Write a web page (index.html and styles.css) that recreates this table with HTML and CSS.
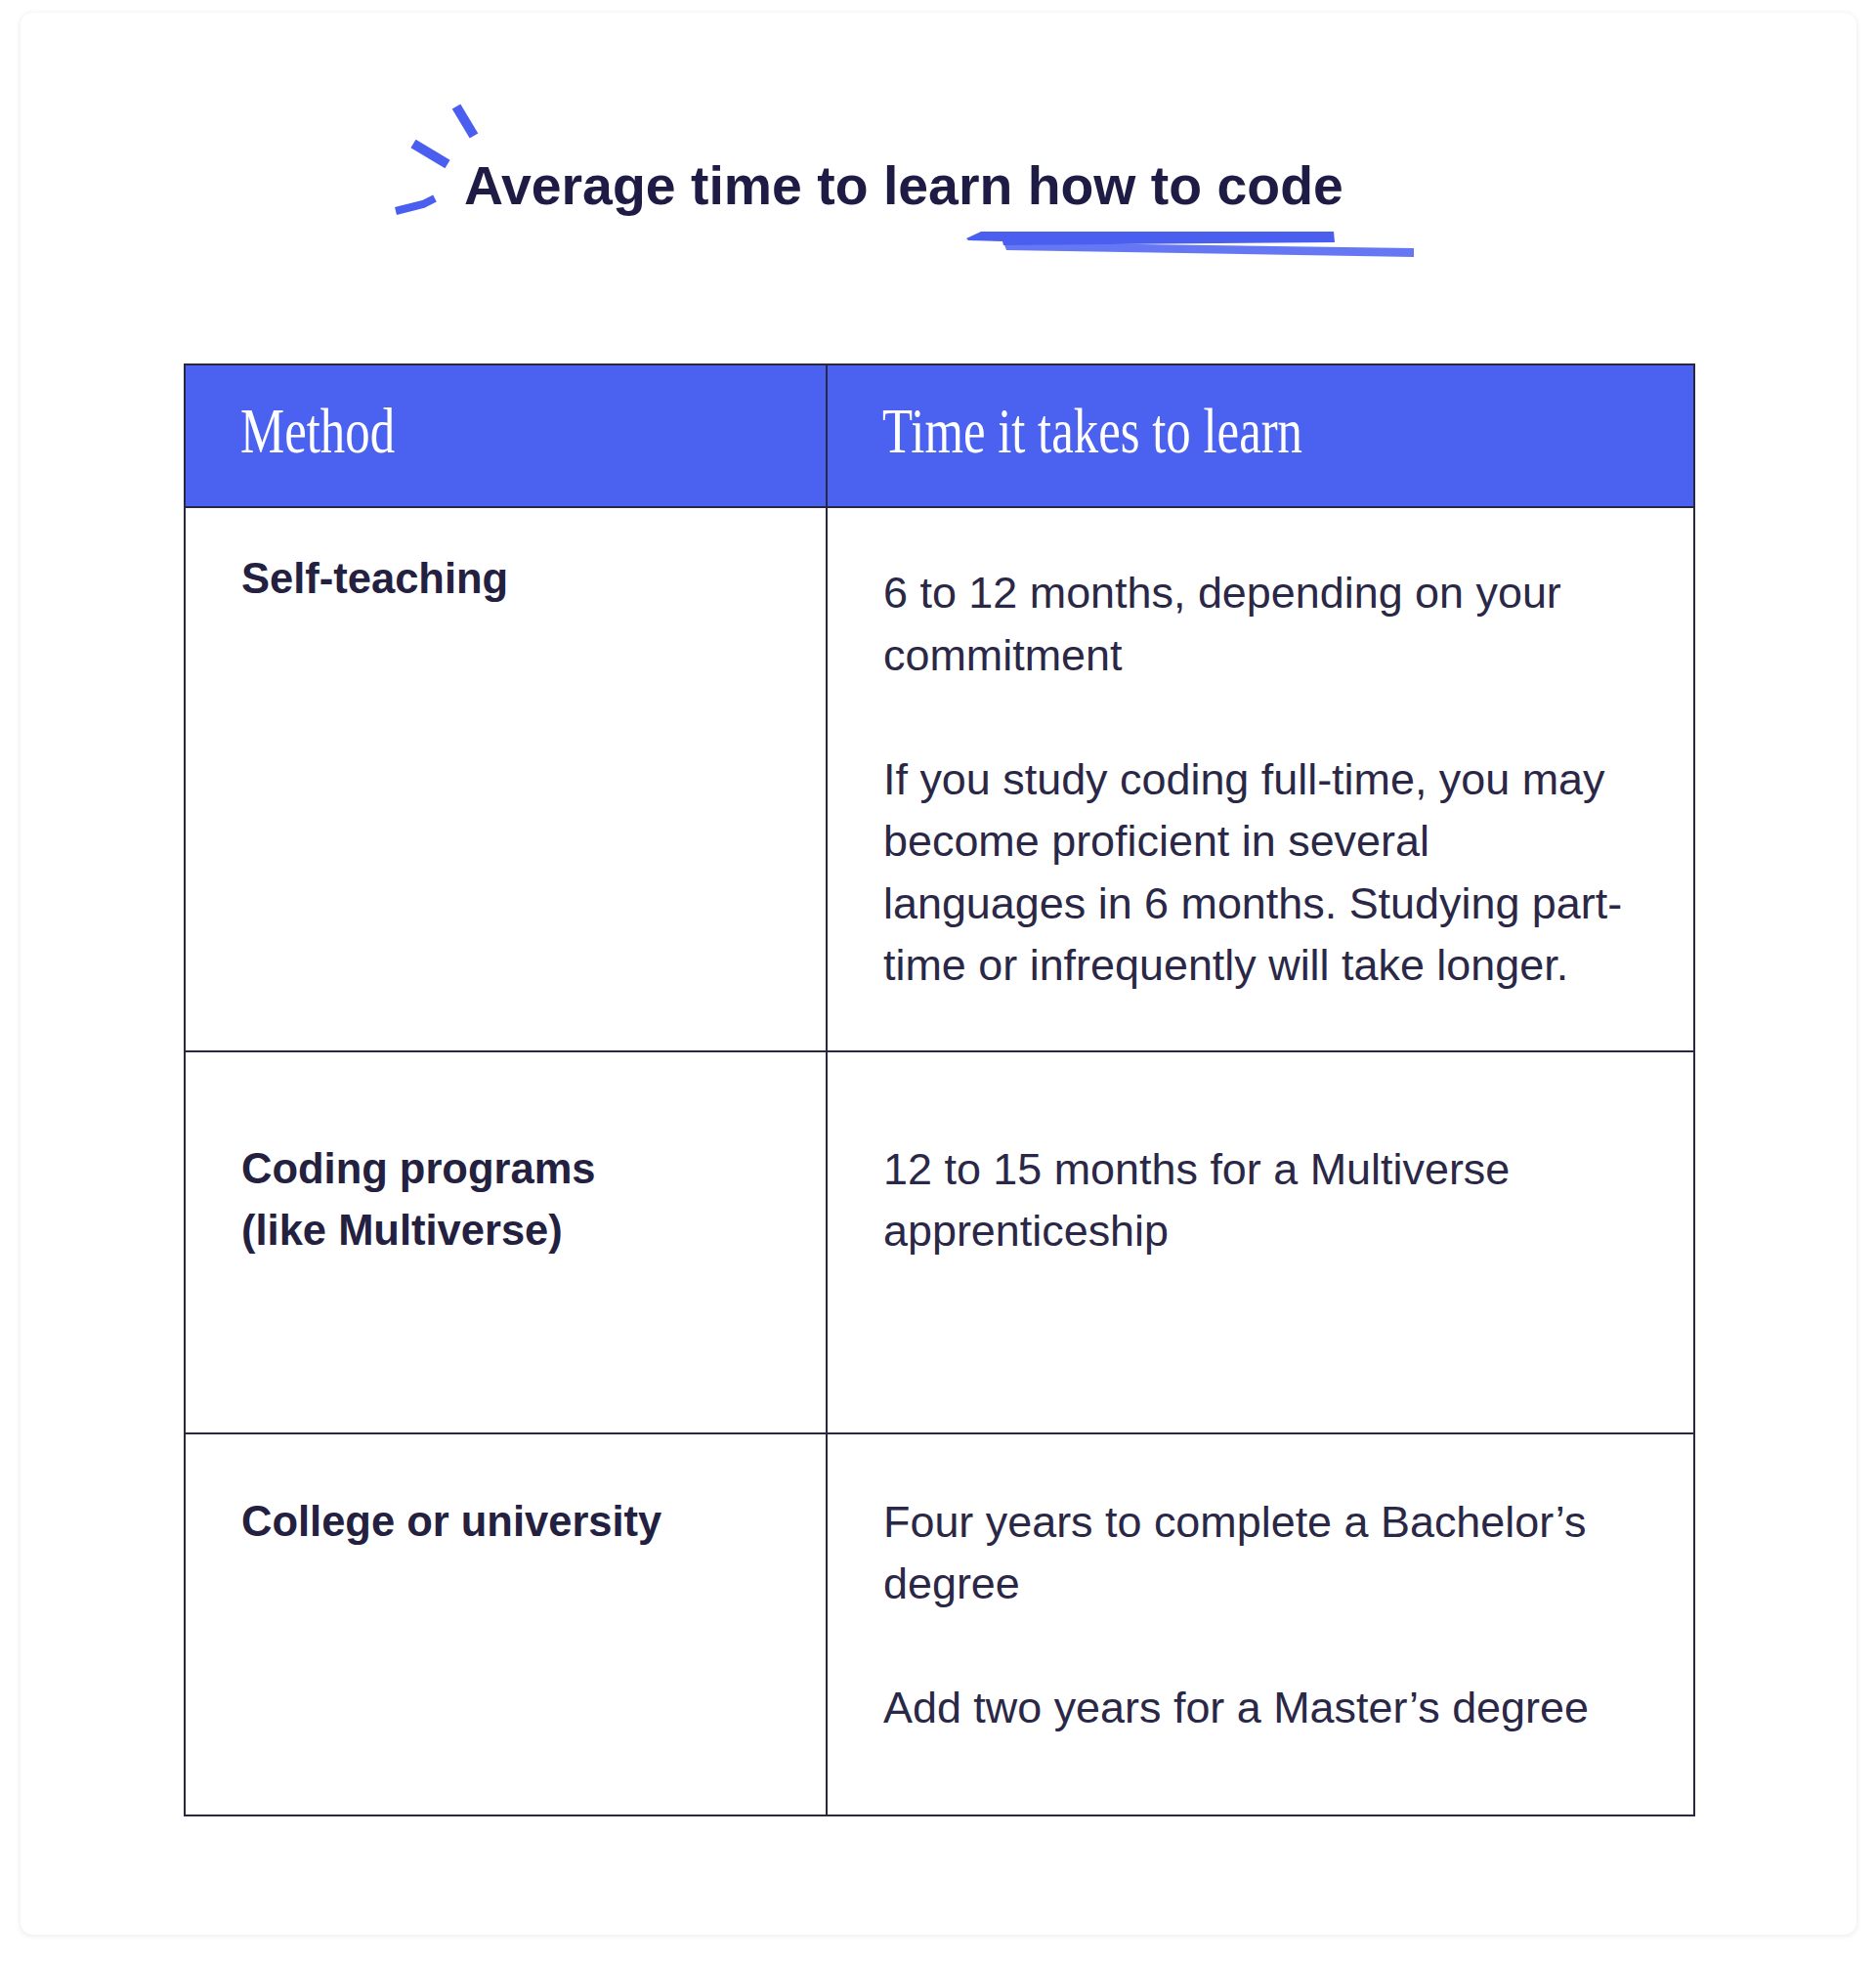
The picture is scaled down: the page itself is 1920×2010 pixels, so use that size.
FILE: index.html
```html
<!DOCTYPE html>
<html lang="en">
<head>
<meta charset="utf-8">
<title>Average time to learn how to code</title>
<link rel="stylesheet" href="styles.css">
</head>
<body>
<main class="card">
  <header class="title-wrap">
    <h1 class="title">Average time to learn how to code</h1>
    <svg class="title-deco" width="1100" height="190" viewBox="0 0 1100 190" aria-hidden="true">
      <g stroke="#4a5ff0" stroke-linecap="butt" fill="none">
        <line x1="79" y1="18" x2="97" y2="48" stroke-width="10"/>
        <line x1="35" y1="56" x2="70" y2="77" stroke-width="10"/>
        <path d="M17 125 L45 118 L57 112" stroke-width="8"/>
      </g>
      <polygon fill="#4a5ff0" points="601,153 616,146 977,146 978,157 639,160 638,156 603,155"/>
      <polygon fill="#4a5ff0" opacity="0.85" points="639,157 1059,163 1059,172 642,165"/>
    </svg>
  </header>

  <table class="grid">
    <colgroup>
      <col class="col-method">
      <col class="col-time">
    </colgroup>
    <thead>
      <tr>
        <th class="head-cell"><span class="head-text">Method</span></th>
        <th class="head-cell"><span class="head-text">Time it takes to learn</span></th>
      </tr>
    </thead>
    <tbody>
      <tr class="row row--self">
        <td class="method">Self-teaching</td>
        <td class="time">
          <p>6 to 12 months, depending on your<br>commitment</p>
          <p>If you study coding full-time, you may<br>become proficient in several<br>languages in 6 months. Studying part-<br>time or infrequently will take longer.</p>
        </td>
      </tr>
      <tr class="row row--program">
        <td class="method">Coding programs<br>(like Multiverse)</td>
        <td class="time">
          <p>12 to 15 months for a Multiverse<br>apprenticeship</p>
        </td>
      </tr>
      <tr class="row row--college">
        <td class="method">College or university</td>
        <td class="time">
          <p>Four years to complete a Bachelor’s<br>degree</p>
          <p>Add two years for a Master’s degree</p>
        </td>
      </tr>
    </tbody>
  </table>
</main>
</body>
</html>
```

FILE: styles.css
```css
* { box-sizing: border-box; }

html, body {
  margin: 0;
  background: #ffffff;
}

body {
  padding: 13px 20px 32px 21px;
  font-family: "Liberation Sans", Arial, sans-serif;
  color: #25233f;
}

.card {
  width: 1879px;
  background: #ffffff;
  border-radius: 12px;
  box-shadow: 0 1px 6px rgba(0, 0, 0, 0.09), 0 0 1px rgba(0, 0, 0, 0.06);
  padding: 144px 167px 121px 167px;
}

.title-wrap {
  position: relative;
  margin-bottom: 149px;
}

.title {
  margin: 0;
  padding-left: 287px;
  font-family: "Liberation Sans", Arial, sans-serif;
  font-weight: 700;
  font-size: 55.4px;
  line-height: 66px;
  color: #1e1c45;
  position: relative;
  z-index: 1;
}

.title-deco {
  position: absolute;
  left: 200px;
  top: -66px;
  z-index: 0;
}

.grid {
  width: 1545px;
  border-collapse: collapse;
  table-layout: fixed;
  border: 2px solid #2a2840;
}

.col-method { width: 657px; }
.col-time { width: 888px; }

.grid th,
.grid td {
  border: 2px solid #2a2840;
  text-align: left;
  vertical-align: top;
}

.head-cell {
  background: #4b62f1;
  color: #ffffff;
  height: 146px;
  padding: 0 0 10px 56px;
  vertical-align: middle !important;
  font-family: "Liberation Serif", "Times New Roman", serif;
  font-weight: 400;
  font-size: 66px;
  line-height: 66px;
  white-space: nowrap;
}

.head-text {
  display: inline-block;
  transform: scaleX(0.77);
  transform-origin: left center;
}

.method {
  padding: 0 20px 0 57px;
  font-weight: 700;
  font-size: 43.5px;
  line-height: 63px;
  color: #23213f;
}

.time {
  padding: 0 20px 0 57px;
  font-weight: 400;
  font-size: 44.9px;
  line-height: 63.5px;
  color: #2a2846;
}

.time p {
  margin: 0 0 63.5px;
  white-space: nowrap;
}

.time p:last-child { margin-bottom: 0; }

.row--self .method { padding-top: 41px; }
.row--self .time { padding-top: 55px; padding-bottom: 55px; }

.row--program { height: 391px; }
.row--program td { padding-top: 88px; }

.row--college { height: 391px; }
.row--college td { padding-top: 58px; }
```
